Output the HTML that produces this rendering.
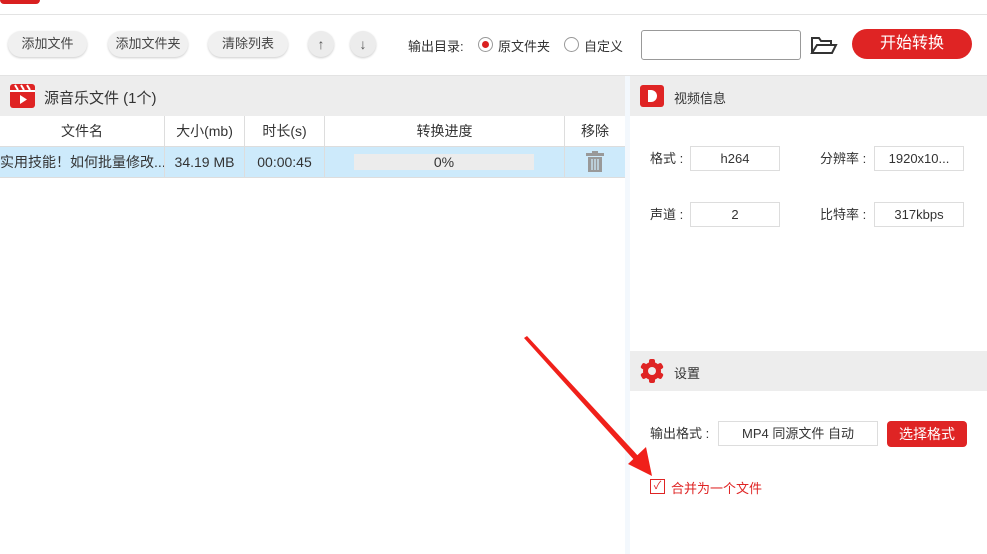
<!DOCTYPE html>
<html><head><meta charset="utf-8"><style>
*{box-sizing:border-box;margin:0;padding:0}
body{width:987px;height:554px;position:relative;background:#fff;font-family:"Liberation Sans","Noto Sans CJK SC",sans-serif;font-size:13px;color:#333;overflow:hidden}
.a{position:absolute}
.btn{position:absolute;top:31px;height:26px;background:#f0f0f0;border-radius:13px;box-shadow:0 1px 2px #ccc;text-align:center;line-height:26px;font-size:13px;color:#444}
.rb{position:absolute;top:31px;width:26px;height:26px;border-radius:13px;background:#ececec;box-shadow:0 1px 2px #ccc;text-align:center;line-height:26px;font-size:14px;font-weight:bold;color:#555}
.hdr{position:absolute;background:#ededed;height:40px}
.th{position:absolute;top:116px;height:31px;line-height:31px;text-align:center;border-right:1px solid #ddd;font-size:14px}
.td{position:absolute;top:147px;height:30px;line-height:30px;text-align:center;border-right:1px solid #ddd;font-size:14px;white-space:nowrap;overflow:hidden}
.box{position:absolute;height:25px;border:1px solid #ddd;text-align:center;line-height:23px;font-size:13px;background:#fff}
.lb{position:absolute;font-size:13px;line-height:25px}
</style></head><body>
<div class="a" style="left:0;top:0;width:40px;height:4px;background:#d92020;border-radius:0 0 6px 6px"></div>
<div class="a" style="left:0;top:14px;width:987px;height:1px;background:#e3e3e3"></div>
<div class="btn" style="left:8px;width:79px">添加文件</div>
<div class="btn" style="left:108px;width:80px">添加文件夹</div>
<div class="btn" style="left:208px;width:80px">清除列表</div>
<div class="rb" style="left:308px">↑</div>
<div class="rb" style="left:350px">↓</div>
<div class="a" style="left:408px;top:36px">输出目录:</div>
<div class="a" style="left:478px;top:37px;width:15px;height:15px;border:1px solid #999;border-radius:50%"><div style="margin:3px;width:7px;height:7px;border-radius:50%;background:#d92020"></div></div>
<div class="a" style="left:498px;top:36px">原文件夹</div>
<div class="a" style="left:564px;top:37px;width:15px;height:15px;border:1px solid #999;border-radius:50%"></div>
<div class="a" style="left:584px;top:36px">自定义</div>
<div class="a" style="left:641px;top:30px;width:160px;height:30px;border:1px solid #999;border-radius:3px"></div>
<svg class="a" style="left:810px;top:35px" width="28" height="20" viewBox="0 0 28 20"><path d="M2 18V3h7l2 3h10v4M2 18h20l4-8H7z" fill="none" stroke="#333" stroke-width="2"/></svg>
<div class="a" style="left:852px;top:29px;width:120px;height:30px;border-radius:15px;background:#df2424;color:#fff;text-align:center;line-height:30px;font-size:16px">开始转换</div>
<div class="a" style="left:0;top:75px;width:987px;height:1px;background:#e3e3e3"></div>
<div class="hdr" style="left:0;top:76px;width:625px"></div>
<svg class="a" style="left:10px;top:84px" width="25" height="24" viewBox="0 0 25 24"><rect x="0" y="0" width="25" height="24" rx="3" fill="#df2424"/><rect x="0" y="6" width="25" height="2" fill="#fff"/><path d="M5 1l3 5M11 1l3 5M17 1l3 5" stroke="#fff" stroke-width="2"/><path d="M10 11v9l7-4.5z" fill="#fff"/></svg>
<div class="a" style="left:44px;top:87px;font-size:15px">源音乐文件 (1个)</div>
<div class="a" style="left:625px;top:76px;width:5px;height:478px;background:#f3f8fd"></div>
<div class="th" style="left:0;width:165px">文件名</div>
<div class="th" style="left:165px;width:80px">大小(mb)</div>
<div class="th" style="left:245px;width:80px">时长(s)</div>
<div class="th" style="left:325px;width:240px">转换进度</div>
<div class="th" style="left:565px;width:60px;border:0">移除</div>
<div class="a" style="left:0;top:146px;width:625px;height:32px;background:#cdeafb;border-top:1px solid #ddd;border-bottom:1px solid #ddd"></div>
<div class="td" style="left:0;width:165px;text-align:left">实用技能！如何批量修改...</div>
<div class="td" style="left:165px;width:80px">34.19 MB</div>
<div class="td" style="left:245px;width:80px">00:00:45</div>
<div class="td" style="left:325px;width:240px"></div>
<div class="a" style="left:354px;top:154px;width:180px;height:16px;background:#ececec;text-align:center;line-height:16px;font-size:14px">0%</div>
<svg class="a" style="left:586px;top:151px" width="18" height="22" viewBox="0 0 18 22"><rect x="0" y="2" width="18" height="3" fill="#999"/><rect x="6" y="0" width="6" height="3" fill="#999"/><path d="M2 6h14v15H2z" fill="#999"/><path d="M6 8v11M9 8v11M12 8v11" stroke="#cdeafb" stroke-width="1.3"/></svg>
<div class="hdr" style="left:630px;top:76px;width:357px"></div>
<svg class="a" style="left:640px;top:85px" width="24" height="22" viewBox="0 0 24 22"><rect width="24" height="22" rx="3" fill="#df2424"/><path d="M8 5h3a6 6 0 010 12H8z" fill="#fff"/></svg>
<div class="a" style="left:674px;top:88px">视频信息</div>
<div class="lb" style="left:650px;top:146px">格式 :</div><div class="box" style="left:690px;top:146px;width:90px">h264</div>
<div class="lb" style="left:820px;top:146px">分辨率 :</div><div class="box" style="left:874px;top:146px;width:90px">1920x10...</div>
<div class="lb" style="left:650px;top:202px">声道 :</div><div class="box" style="left:690px;top:202px;width:90px">2</div>
<div class="lb" style="left:820px;top:202px">比特率 :</div><div class="box" style="left:874px;top:202px;width:90px">317kbps</div>
<div class="hdr" style="left:630px;top:351px;width:357px"></div>
<svg class="a" style="left:640px;top:359px" width="24" height="24" viewBox="0 0 24 24"><circle cx="12" cy="12" r="9" fill="#df2424"/><g fill="#df2424"><rect x="9" y="0" width="6" height="24" rx="2"/><rect x="9" y="0" width="6" height="24" rx="2" transform="rotate(60 12 12)"/><rect x="9" y="0" width="6" height="24" rx="2" transform="rotate(120 12 12)"/></g><circle cx="12" cy="12" r="4" fill="#ededed"/></svg>
<div class="a" style="left:674px;top:363px">设置</div>
<div class="lb" style="left:650px;top:421px">输出格式 :</div>
<div class="box" style="left:718px;top:421px;width:160px">MP4 同源文件 自动</div>
<div class="a" style="left:887px;top:421px;width:80px;height:26px;border-radius:4px;background:#df2424;color:#fff;text-align:center;line-height:26px;font-size:14px">选择格式</div>
<div class="a" style="left:650px;top:479px;width:15px;height:15px;border:1.5px solid #df2424;color:#df2424;font-size:11px;line-height:12px;text-align:center">✓</div>
<div class="a" style="left:671px;top:478px;color:#df2424;font-size:13px">合并为一个文件</div>
<svg class="a" style="left:0;top:0" width="987" height="554"><path d="M524 338L527 336L640 458L636 462z" fill="#f0201a"/><path d="M652 476L628 464L646 447z" fill="#f0201a"/></svg>
</body></html>
